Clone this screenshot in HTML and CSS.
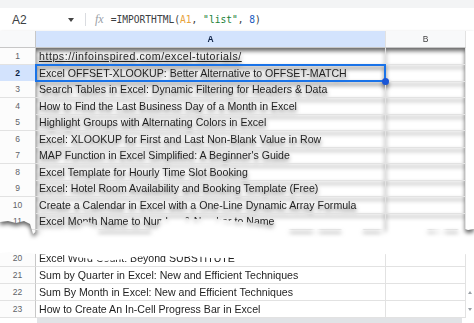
FILE: index.html
```html
<!DOCTYPE html>
<html lang="en">
<head>
    <meta charset="UTF-8">
    <meta name="viewport" content="width=device-width, initial-scale=1.0">
    <title>IMPORTHTML list</title>
    <link rel="stylesheet" href="styles.css">
</head>
<body>
<div class="toolbar"></div>
<div class="formula-bar">
    <div class="name-box">A2</div>
    <span class="caret"></span>
    <span class="divider"></span>
    <span class="fx">fx</span>
    <span class="formula">=IMPORTHTML(<span class="ref">A1</span>, <span class="str">"list"</span>, <span class="num">8</span>)</span>
</div>

<div class="top-sheet">
    <div class="grid top-grid">
        <div class="row head">
            <div class="rh corner"></div>
            <div class="cell col-a selected-col">A</div>
            <div class="cell col-b">B</div>
            <div class="scroll"><span class="thumb"></span></div>
        </div>
        <div class="row">
            <div class="rh">1</div>
            <div class="cell col-a"><span class="link">https://infoinspired.com/excel-tutorials/</span></div>
            <div class="cell col-b"></div>
            <div class="scroll"></div>
        </div>
        <div class="row active">
            <div class="rh">2</div>
            <div class="cell col-a current">Excel OFFSET-XLOOKUP: Better Alternative to OFFSET-MATCH</div>
            <div class="cell col-b"></div>
            <div class="scroll"></div>
        </div>
        <div class="row">
            <div class="rh">3</div>
            <div class="cell col-a">Search Tables in Excel: Dynamic Filtering for Headers &amp; Data</div>
            <div class="cell col-b"></div>
            <div class="scroll"></div>
        </div>
        <div class="row">
            <div class="rh">4</div>
            <div class="cell col-a">How to Find the Last Business Day of a Month in Excel</div>
            <div class="cell col-b"></div>
            <div class="scroll"></div>
        </div>
        <div class="row">
            <div class="rh">5</div>
            <div class="cell col-a">Highlight Groups with Alternating Colors in Excel</div>
            <div class="cell col-b"></div>
            <div class="scroll"></div>
        </div>
        <div class="row">
            <div class="rh">6</div>
            <div class="cell col-a">Excel: XLOOKUP for First and Last Non-Blank Value in Row</div>
            <div class="cell col-b"></div>
            <div class="scroll"></div>
        </div>
        <div class="row">
            <div class="rh">7</div>
            <div class="cell col-a">MAP Function in Excel Simplified: A Beginner's Guide</div>
            <div class="cell col-b"></div>
            <div class="scroll"></div>
        </div>
        <div class="row">
            <div class="rh">8</div>
            <div class="cell col-a">Excel Template for Hourly Time Slot Booking</div>
            <div class="cell col-b"></div>
            <div class="scroll"></div>
        </div>
        <div class="row">
            <div class="rh">9</div>
            <div class="cell col-a">Excel: Hotel Room Availability and Booking Template (Free)</div>
            <div class="cell col-b"></div>
            <div class="scroll"></div>
        </div>
        <div class="row">
            <div class="rh">10</div>
            <div class="cell col-a">Create a Calendar in Excel with a One-Line Dynamic Array Formula</div>
            <div class="cell col-b"></div>
            <div class="scroll"></div>
        </div>
        <div class="row">
            <div class="rh">11</div>
            <div class="cell col-a">Excel Month Name to Number &amp; Number to Name</div>
            <div class="cell col-b"></div>
            <div class="scroll"></div>
        </div>
        <div class="row">
            <div class="rh">12</div>
            <div class="cell col-a"></div>
            <div class="cell col-b"></div>
            <div class="scroll"></div>
        </div>
    </div>
</div>

<div class="bottom-sheet">
    <div class="grid bottom-grid">
        <div class="row tall">
            <div class="rh">20</div>
            <div class="cell col-a">Excel Word Count: Beyond SUBSTITUTE</div>
            <div class="cell col-b"></div>
            <div class="scroll"></div>
        </div>
        <div class="row tall">
            <div class="rh">21</div>
            <div class="cell col-a">Sum by Quarter in Excel: New and Efficient Techniques</div>
            <div class="cell col-b"></div>
            <div class="scroll"></div>
        </div>
        <div class="row tall">
            <div class="rh">22</div>
            <div class="cell col-a">Sum By Month in Excel: New and Efficient Techniques</div>
            <div class="cell col-b"></div>
            <div class="scroll"><span class="arrow up"></span></div>
        </div>
        <div class="row tall">
            <div class="rh">23</div>
            <div class="cell col-a">How to Create An In-Cell Progress Bar in Excel</div>
            <div class="cell col-b"></div>
            <div class="scroll"><span class="arrow down"></span></div>
        </div>
    </div>
    <div class="hscroll"><span class="hthumb"></span></div>
</div>
</body>
</html>
```

FILE: styles.css
```css
body {
    margin: 0;
    width: 474px;
    height: 323px;
    overflow: hidden;
    background-color: #fff;
    font-family: "Liberation Sans", Arial, sans-serif;
    color: #1f1f1f;
}

/* top strip + formula bar */
.toolbar {
    height: 8px;
    background-color: #f3f4f5;
}
.formula-bar {
    height: 23px;
    display: flex;
    align-items: center;
    padding-left: 12px;
    background-color: #fff;
}
.name-box {
    width: 56px;
    font-size: 12px;
    color: #3c4043;
}
.caret {
    width: 0;
    height: 0;
    border-left: 3px solid transparent;
    border-right: 3px solid transparent;
    border-top: 4px solid #444;
}
.divider {
    width: 1px;
    height: 13px;
    margin-left: 11px;
    background-color: #dadce0;
}
.fx {
    margin-left: 9px;
    font-family: "Liberation Serif", serif;
    font-style: italic;
    font-size: 12px;
    color: #9aa0a6;
}
.formula {
    margin-left: 7px;
    font-family: "DejaVu Sans Mono", monospace;
    font-size: 9.6px;
    color: #3c4043;
    white-space: pre;
}
.formula .ref { color: #e8a33d; }
.formula .str { color: #188038; }
.formula .num { color: #1a5bbf; }

/* grid */
.row {
    display: grid;
    grid-template-columns: 36px 350px 80px 8px;
    height: 16.5px;
}
.row.head { height: 17px; }
.row.tall { height: 17px; }
.rh {
    box-sizing: border-box;
    border-right: 1px solid #c7c7c7;
    border-bottom: 1px solid #e2e2e2;
    background-color: #fcfcfc;
    font-size: 8.5px;
    color: #5f6368;
    text-align: center;
    line-height: 16px;
}
.cell {
    box-sizing: border-box;
    border-right: 1px solid #e2e2e2;
    border-bottom: 1px solid #e2e2e2;
    padding-left: 3px;
    font-size: 10.6px;
    line-height: 16px;
    white-space: nowrap;
    overflow: hidden;
}
.head .rh, .head .cell {
    border-bottom-color: #c7c7c7;
    background-color: #f8f9fa;
    font-size: 8.5px;
    line-height: 17px;
    text-align: center;
    color: #444;
    padding-left: 0;
}
.head .selected-col {
    background-color: #d3e3fd;
    color: #0b1f44;
    font-weight: bold;
}
.active .rh {
    background-color: #d3e3fd;
    color: #0b1f44;
    font-weight: bold;
}
.link {
    text-decoration: underline;
    letter-spacing: 0.55px;
}

.scroll {
    position: relative;
    background-color: #fff;
}
.thumb {
    position: absolute;
    left: 1px;
    top: 19px;
    width: 6px;
    height: 18px;
    border-radius: 3px;
    background-color: #dadce0;
}
.arrow {
    position: absolute;
    left: 2px;
    top: 7px;
    width: 0;
    height: 0;
    border-left: 2px solid transparent;
    border-right: 2px solid transparent;
}
.arrow.up { border-bottom: 3px solid #9aa0a6; }
.arrow.down { border-top: 3px solid #9aa0a6; }

/* selected cell A2 */
.current {
    position: relative;
    overflow: visible;
}
.current::after {
    content: "";
    position: absolute;
    left: -1px;
    top: -1px;
    right: -1px;
    bottom: -1px;
    border: 2px solid #1a73e8;
}
.current::before {
    content: "";
    position: absolute;
    right: -4px;
    bottom: -4px;
    width: 7px;
    height: 7px;
    border-radius: 50%;
    background-color: #1a56d6;
    z-index: 2;
}

/* torn paper pieces */
.top-sheet {
    height: 219px;
    filter: drop-shadow(0 3px 2px rgba(0, 0, 0, 0.6));
}
.top-grid {
    clip-path: polygon(0 0, 474px 0, 474px 198px, 468px 199px, 462px 197px, 454px 200px, 442px 198px, 430px 199px, 418px 196px, 410px 191px, 404px 198px, 390px 197px, 378px 199px, 366px 200px, 358px 196px, 350px 195px, 340px 199px, 328px 200px, 316px 198px, 304px 200px, 292px 199px, 280px 196px, 268px 194px, 256px 192px, 244px 191px, 232px 190px, 220px 188px, 208px 187px, 196px 188px, 184px 187px, 172px 188px, 162px 188px, 156px 196px, 148px 200px, 136px 202px, 124px 200px, 112px 201px, 100px 200px, 92px 192px, 84px 190px, 76px 197px, 66px 196px, 56px 198px, 46px 197px, 38px 199px, 33px 203px, 30px 193px, 24px 190px, 16px 192px, 8px 190px, 0 191px);
}
.bottom-grid {
    clip-path: polygon(0 3px, 10px 2px, 20px 4px, 30px 3px, 36px 4px, 50px 5px, 65px 5px, 75px 7px, 85px 8px, 95px 10px, 105px 11px, 115px 10px, 125px 9px, 135px 7px, 150px 6px, 165px 6px, 180px 7px, 195px 6px, 210px 8px, 225px 8px, 240px 6px, 260px 5px, 300px 4px, 340px 5px, 380px 4px, 420px 5px, 474px 4px, 474px 100%, 0 100%);
}
.hscroll {
    height: 5px;
    padding-left: 37px;
}
.hthumb {
    display: block;
    width: 425px;
    height: 5px;
    background-color: #e1e3e6;
}
```
